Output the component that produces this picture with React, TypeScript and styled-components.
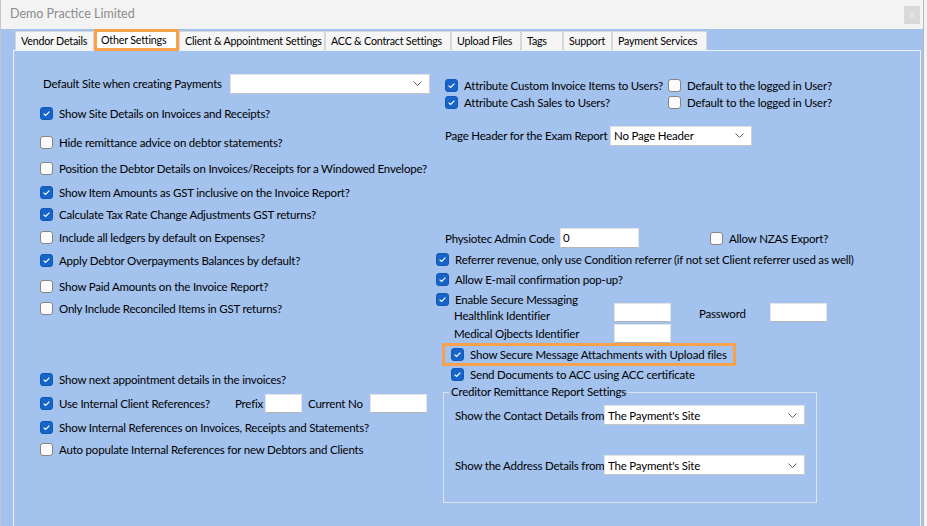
import styled, { createGlobalStyle } from "styled-components";

/**
 * palette
 *
 * panel #a3c2ed  accent #1764c8  highlight #f8a14a
 */

const GlobalStyle = createGlobalStyle`
  html, body {
    margin: 0;
    padding: 0;
    background: #f3f3f3;
  }
  body {
    font-family: Lato, "Liberation Sans", sans-serif;
    font-size: 11.5px;
    letter-spacing: -0.2px;
    color: #000;
  }
`;

const Window = styled.div`
  width: 922px;
  height: 526px;
  border-left: 1px solid #c6c6c6;
  border-right: 1px solid #b8b8b8;
  background: #a3c2ed;
  display: flex;
  flex-direction: column;
  overflow: hidden;
`;

const TitleBar = styled.div`
  height: 29px;
  flex: none;
  background: #f3f3f3;
  display: flex;
  justify-content: space-between;
  padding: 0 3px 0 9px;
`;

const Title = styled.span`
  font-size: 12.5px;
  letter-spacing: 0;
  line-height: 27px;
  color: #8c8c8c;
`;

const CloseButton = styled.div`
  width: 16px;
  height: 18px;
  margin-top: 6px;
  background: #d9d9d9;
  color: #f2f2f2;
  font-size: 10px;
  line-height: 17px;
  text-align: center;
`;

const TabStrip = styled.div`
  height: 21px;
  flex: none;
  display: flex;
  align-items: flex-end;
  padding-left: 14px;
`;

const Tab = styled.div<{ $w: number; $active?: boolean }>`
  box-sizing: border-box;
  width: ${(p) => p.$w}px;
  height: ${(p) => (p.$active ? 22 : 19)}px;
  margin-bottom: ${(p) => (p.$active ? -1 : 0)}px;
  position: relative;
  z-index: ${(p) => (p.$active ? 1 : 0)};
  padding-left: ${(p) => (p.$active ? 4 : 5)}px;
  background: ${(p) => (p.$active ? "#fff" : "#f5f5f5")};
  border: ${(p) => (p.$active ? "3px solid #f8a14a" : "1px solid #d6d6d6")};
  border-bottom: ${(p) => (p.$active ? "3px solid #f8a14a" : "none")};
  font-size: 10.7px;
  line-height: ${(p) => (p.$active ? 15 : 18)}px;
  letter-spacing: -0.2px;
  white-space: nowrap;
`;

const Panel = styled.div`
  flex: 1;
  box-sizing: border-box;
  width: 908px;
  margin-left: 12px;
  border: 1px solid #eef3fb;
  border-bottom: none;
  display: grid;
  grid-template-columns: 396px 1fr;
  padding-left: 26px;
`;

const Column = styled.div<{ $top: number }>`
  display: flex;
  flex-direction: column;
  padding-top: ${(p) => p.$top}px;
`;

const Row = styled.div<{ $mt?: number; $h?: number; $indent?: number }>`
  display: flex;
  align-items: center;
  height: ${(p) => p.$h ?? 20}px;
  margin-top: ${(p) => p.$mt ?? 0}px;
  margin-left: ${(p) => p.$indent ?? 0}px;
  white-space: nowrap;
`;

const Label = styled.span<{ $w?: number; $ml?: number }>`
  flex: none;
  width: ${(p) => (p.$w ? `${p.$w}px` : "auto")};
  margin-left: ${(p) => p.$ml ?? 0}px;
  white-space: nowrap;
`;

const CheckWrap = styled.span<{ $w?: number; $ml?: number }>`
  display: flex;
  align-items: center;
  flex: none;
  width: ${(p) => (p.$w ? `${p.$w}px` : "auto")};
  margin-left: ${(p) => p.$ml ?? 0}px;
`;

const Box = styled.span<{ $on: boolean }>`
  box-sizing: border-box;
  width: 13px;
  height: 13px;
  flex: none;
  border-radius: 3px;
  border: 1px solid ${(p) => (p.$on ? "#1258b8" : "#858585")};
  background: ${(p) => (p.$on ? "#1764c8" : "#fbfbfb")};
  display: flex;
  align-items: center;
  justify-content: center;
`;

const CheckText = styled.span`
  margin-left: 6px;
  white-space: nowrap;
`;

const TextBox = styled.div<{ $w: number; $h?: number; $ml?: number }>`
  box-sizing: border-box;
  flex: none;
  width: ${(p) => p.$w}px;
  height: ${(p) => p.$h ?? 19}px;
  margin-left: ${(p) => p.$ml ?? 0}px;
  background: #fff;
  border: 1px solid #e4e4e4;
  border-bottom-color: #b4b4b4;
  padding-left: 2px;
  line-height: 17px;
`;

const Select = styled.div<{ $w: number }>`
  box-sizing: border-box;
  flex: none;
  width: ${(p) => p.$w}px;
  height: 20px;
  background: #fff;
  border: 1px solid #e2e2e2;
  border-bottom-color: #c4c4c4;
  border-right-color: #cfcfcf;
  display: flex;
  align-items: center;
  justify-content: space-between;
  padding: 0 7px 0 3px;
`;

const SubGrid = styled.div`
  display: grid;
  grid-template-columns: 160px 57px 28px 71px 57px;
  grid-template-rows: 19px 19px;
  row-gap: 2px;
  margin-top: -6px;
  margin-left: 18px;
`;

const GridLabel = styled.span<{ $pt: number; $col?: number }>`
  grid-column: ${(p) => p.$col ?? 1};
  padding-top: ${(p) => p.$pt}px;
  line-height: 14px;
  white-space: nowrap;
`;

const GridBox = styled(TextBox)<{ $col: number }>`
  grid-column: ${(p) => p.$col};
`;

const Highlight = styled.div`
  align-self: flex-start;
  display: flex;
  align-items: center;
  height: 17px;
  margin-left: 6px;
  border: 3px solid #f8a14a;
  padding: 0 6px 0 6px;
`;

const Group = styled.fieldset`
  box-sizing: border-box;
  width: 374px;
  min-width: 0;
  margin: 2px 0 0 7px;
  padding: 0 0 27px 11px;
  border: 1px solid #dde4ee;
`;

const Legend = styled.legend`
  padding: 0 2px;
  margin-left: -6px;
  line-height: 14px;
`;

const Check = ({
  on,
  text,
  w,
  ml,
}: {
  on: boolean;
  text: string;
  w?: number;
  ml?: number;
}) => (
  <CheckWrap $w={w} $ml={ml}>
    <Box $on={on}>
      {on && (
        <svg width="9" height="9" viewBox="0 0 9 9">
          <path d="M1.6 4.6 L3.6 6.5 L7.4 2.6" fill="none" stroke="#fff" strokeWidth="1.2" />
        </svg>
      )}
    </Box>
    <CheckText>{text}</CheckText>
  </CheckWrap>
);

const Chevron = () => (
  <svg width="9" height="5" viewBox="0 0 9 5">
    <path d="M0.5 0.5 L4.5 4.5 L8.5 0.5" fill="none" stroke="#5f5f5f" strokeWidth="1" />
  </svg>
);

const tabs = [
  { name: "Vendor Details", w: 79 },
  { name: "Other Settings", w: 85, active: true },
  { name: "Client & Appointment Settings", w: 146 },
  { name: "ACC & Contract Settings", w: 126 },
  { name: "Upload Files", w: 70 },
  { name: "Tags", w: 42 },
  { name: "Support", w: 49 },
  { name: "Payment Services", w: 95 },
];

const leftTop = [
  { text: "Show Site Details on Invoices and Receipts?", on: true, mt: 9 },
  { text: "Hide remittance advice on debtor statements?", on: false, mt: 9 },
  { text: "Position the Debtor Details on Invoices/Receipts for a Windowed Envelope?", on: false, mt: 6 },
  { text: "Show Item Amounts as GST inclusive on the Invoice Report?", on: true, mt: 4 },
  { text: "Calculate Tax Rate Change Adjustments GST returns?", on: true, mt: 2 },
  { text: "Include all ledgers by default on Expenses?", on: false, mt: 3 },
  { text: "Apply Debtor Overpayments Balances by default?", on: true, mt: 3 },
  { text: "Show Paid Amounts on the Invoice Report?", on: false, mt: 6 },
  { text: "Only Include Reconciled Items in GST returns?", on: false, mt: 2 },
];

const messaging = [
  { text: "Referrer revenue, only use Condition referrer (if not set Client referrer used as well)", mt: 1 },
  { text: "Allow E-mail confirmation pop-up?", mt: 0 },
  { text: "Enable Secure Messaging", mt: 0 },
];

const App = () => {
  return (
    <>
      <GlobalStyle />
      <Window>
        <TitleBar>
          <Title>Demo Practice Limited</Title>
          <CloseButton>x</CloseButton>
        </TitleBar>
        <TabStrip>
          {tabs.map((t) => (
            <Tab key={t.name} $w={t.w} $active={t.active}>
              {t.name}
            </Tab>
          ))}
        </TabStrip>
        <Panel>
          <Column $top={22}>
            <Row $h={21} $indent={3}>
              <Label $w={187}>Default Site when creating Payments</Label>
              <Select $w={200}>
                <span />
                <Chevron />
              </Select>
            </Row>
            {leftTop.map((c) => (
              <Row key={c.text} $mt={c.mt}>
                <Check on={c.on} text={c.text} />
              </Row>
            ))}
            <Row $mt={51}>
              <Check on text="Show next appointment details in the invoices?" />
            </Row>
            <Row $mt={4}>
              <Check on text="Use Internal Client References?" w={195} />
              <Label $w={30}>Prefix</Label>
              <TextBox $w={37} />
              <Label $w={62} $ml={6}>
                Current No
              </Label>
              <TextBox $w={57} />
            </Row>
            <Row $mt={4}>
              <Check on text="Show Internal References on Invoices, Receipts and Statements?" />
            </Row>
            <Row $mt={2}>
              <Check on={false} text="Auto populate Internal References for new Debtors and Clients" />
            </Row>
          </Column>

          <Column $top={26}>
            <Row $h={17} $indent={9}>
              <Check on text="Attribute Custom Invoice Items to Users?" w={223} />
              <Check on={false} text="Default to the logged in User?" />
            </Row>
            <Row $h={17} $indent={9}>
              <Check on text="Attribute Cash Sales to Users?" w={223} />
              <Check on={false} text="Default to the logged in User?" />
            </Row>
            <Row $h={21} $mt={14} $indent={9}>
              <Label $w={165}>Page Header for the Exam Report</Label>
              <Select $w={142}>
                <span>No Page Header</span>
                <Chevron />
              </Select>
            </Row>
            <Row $mt={82} $indent={9}>
              <Label $w={115}>Physiotec Admin Code</Label>
              <TextBox $w={79} $h={20}>
                0
              </TextBox>
              <Check on={false} text="Allow NZAS Export?" ml={71} />
            </Row>
            {messaging.map((m) => (
              <Row key={m.text} $mt={m.mt}>
                <Check on text={m.text} />
              </Row>
            ))}
            <SubGrid>
              <GridLabel $pt={6}>Healthlink Identifier</GridLabel>
              <GridBox $w={57} $col={2} />
              <GridLabel $pt={4} $col={4}>
                Password
              </GridLabel>
              <GridBox $w={57} $col={5} />
              <GridLabel $pt={3}>Medical Ojbects Identifier</GridLabel>
              <GridBox $w={57} $col={2} />
            </SubGrid>
            <Highlight>
              <Check on text="Show Secure Message Attachments with Upload files" />
            </Highlight>
            <Row $h={17} $indent={15}>
              <Check on text="Send Documents to ACC using ACC certificate" />
            </Row>
            <Group>
              <Legend>Creditor Remittance Report Settings</Legend>
              <Row $mt={6}>
                <Label $w={149}>Show the Contact Details from</Label>
                <Select $w={201}>
                  <span>The Payment's Site</span>
                  <Chevron />
                </Select>
              </Row>
              <Row $mt={30}>
                <Label $w={149}>Show the Address Details from</Label>
                <Select $w={201}>
                  <span>The Payment's Site</span>
                  <Chevron />
                </Select>
              </Row>
            </Group>
          </Column>
        </Panel>
      </Window>
    </>
  );
};

export default App;
